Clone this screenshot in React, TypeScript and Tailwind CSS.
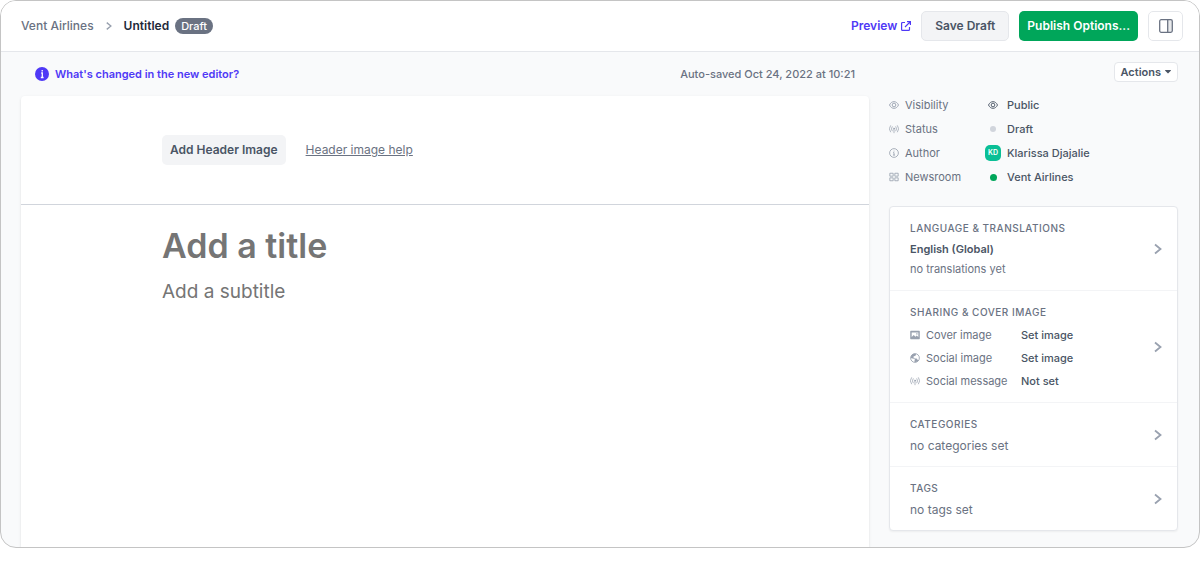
import { useId, type ReactNode } from "react";

type IconProps = { className?: string };

function EyeIcon({ className = "" }: IconProps) {
  return (
    <svg viewBox="0 0 12 10" fill="none" stroke="currentColor" strokeWidth="1.100" strokeLinejoin="round" className={className} aria-hidden="true">
      <path d="M.6 5C1.800 2.400 3.700 1 6 1S10.200 2.400 11.400 5C10.200 7.600 8.300 9 6 9S1.800 7.600.6 5Z" />
      <circle cx="6" cy="5" r="2.200" />
    </svg>
  );
}

function SignalIcon({ className = "" }: IconProps) {
  return (
    <svg viewBox="0 0 24 24" fill="none" stroke="currentColor" strokeWidth="1.800" strokeLinecap="round" className={className} aria-hidden="true">
      <path d="M3.500 4a12 12 0 0 0 0 15M20.500 4a12 12 0 0 1 0 15M7.500 6.500a8 8 0 0 0 0 10M16.500 6.500a8 8 0 0 1 0 10M12 12v9" />
      <circle cx="12" cy="11" r="1.500" />
    </svg>
  );
}

function InfoOutlineIcon({ className = "" }: IconProps) {
  return (
    <svg viewBox="0 0 24 24" fill="none" stroke="currentColor" strokeWidth="2" className={className} aria-hidden="true">
      <circle cx="12" cy="12" r="10.500" />
      <path d="M10 11h2v6M9.500 17h5M12 6.500v2" />
    </svg>
  );
}

function GridIcon({ className = "" }: IconProps) {
  return (
    <svg viewBox="0 0 24 24" fill="none" stroke="currentColor" strokeWidth="2" className={className} aria-hidden="true">
      <path d="M2 3h8v7H2zM14 3h8v7h-8zM2 14h8v7H2zM14 14h8v7h-8z" />
    </svg>
  );
}

function PictureIcon({ className = "" }: IconProps) {
  return (
    <svg viewBox="0 0 24 24" fill="currentColor" fillRule="evenodd" className={className} aria-hidden="true">
      <path d="M2 2h20a1.500 1.500 0 0 1 1.500 1.500v17A1.500 1.500 0 0 1 22 22H2A1.500 1.500 0 0 1 .5 20.500v-17A1.500 1.500 0 0 1 2 2Zm2 4V17l5-5 4 4 3-3 4 4V6H4Zm11 2h3v3h-3V8Z" />
    </svg>
  );
}

function GlobeIcon({ className = "" }: IconProps) {
  return (
    <svg viewBox="0 0 24 24" className={className} aria-hidden="true">
      <circle cx="12" cy="12" r="10.500" fill="none" stroke="currentColor" strokeWidth="2" />
      <path fill="currentColor" d="M2 12C2 5 7 1 13 2l2 2-3 3-3 1-1 3 3 1-1 2-4-1-4-1ZM10 13l6 0 2 3 3 1c-2 3-5 5-9 5l-2-3 2-2-2-4Z" />
    </svg>
  );
}

function InfoSolidIcon({ className = "" }: IconProps) {
  return (
    <svg viewBox="0 0 14 14" className={className} aria-hidden="true">
      <circle cx="7" cy="7" r="7" fill="currentColor" />
      <path d="M6.200 6H7.300V10.500M5.800 10.500h2.800M7.200 3v1.500" fill="none" stroke="white" strokeWidth="1.300" />
    </svg>
  );
}

function ExternalIcon({ className = "" }: IconProps) {
  return (
    <svg viewBox="0 0 10 10" fill="none" stroke="currentColor" strokeWidth="1.200" className={className} aria-hidden="true">
      <path d="M4 1.500H1.600a1 1 0 0 0-1 1v5.900a1 1 0 0 0 1 1h5.900a1 1 0 0 0 1-1V6M6 .6h3.400V4M9.400.6 4 6" />
    </svg>
  );
}

function PanelIcon({ className = "" }: IconProps) {
  return (
    <svg viewBox="0 0 14 14" fill="none" stroke="currentColor" strokeWidth="1.300" className={className} aria-hidden="true">
      <path d="M9 1h4v12H9z" fill="currentColor" fillOpacity=".15" stroke="none" />
      <rect x=".7" y=".7" width="12.600" height="12.600" rx="1.500" />
      <path d="M8.700.7v12.600" />
    </svg>
  );
}

function ChevronIcon({ className = "" }: IconProps) {
  return (
    <svg viewBox="0 0 8 12" fill="none" stroke="currentColor" strokeWidth="1.800" className={className} aria-hidden="true">
      <path d="M1 1.500 6.500 6 1 10.500" />
    </svg>
  );
}

function CaretIcon({ className = "" }: IconProps) {
  return (
    <svg viewBox="0 0 6 4" fill="currentColor" className={className} aria-hidden="true">
      <path d="M.5 0h5a.4.4 0 0 1 .3.700L3.300 3.300a.5.5 0 0 1-.6 0L.2.700A.4.4 0 0 1 .5 0Z" />
    </svg>
  );
}

function MetaRow({ icon, label, marker, value }: { icon: ReactNode; label: string; marker: ReactNode; value: string }) {
  return (
    <div className="flex h-6 items-center">
      <dt className="flex w-24 items-center gap-1.5 text-gray-500">
        <span className="text-gray-400">{icon}</span>
        {label}
      </dt>
      <dd className="flex items-center gap-1.5 font-medium text-gray-600">
        <span className="flex w-4 justify-center">{marker}</span>
        {value}
      </dd>
    </div>
  );
}

function PanelSection({ title, children }: { title: string; children: ReactNode }) {
  const id = useId();
  return (
    <section aria-labelledby={id} className="flex items-center justify-between pr-3.5 pl-5">
      <div className="pt-3.5 pb-2.5">
        <h2 id={id} className="text-[10px] leading-3.5 font-medium tracking-wider text-gray-500 uppercase">
          {title}
        </h2>
        {children}
      </div>
      <button type="button" aria-label={`Open ${title}`} className="p-px text-gray-400">
        <ChevronIcon className="h-3 w-2" />
      </button>
    </section>
  );
}

function SharingRow({ icon, label, value }: { icon: ReactNode; label: string; value: string }) {
  return (
    <div className="flex h-[23px] items-center">
      <dt className="flex w-[111px] items-center gap-1.5 text-gray-500">
        <span className="text-gray-400">{icon}</span>
        {label}
      </dt>
      <dd className="font-medium text-gray-600">{value}</dd>
    </div>
  );
}

export default function App() {
  return (
    <div className="overflow-hidden rounded-2xl border border-[#c4c4c4] bg-gray-50 font-['Inter',sans-serif] text-[11px] leading-4 text-gray-600">
      <header className="flex items-center justify-between border-b border-gray-200 bg-white py-2.5 pr-4 pl-5">
        <nav aria-label="Breadcrumb" className="flex items-center text-xs leading-4">
          <a href="#newsroom" className="font-medium text-gray-500">Vent Airlines</a>
          <ChevronIcon className="mx-3 h-2.5 w-1.5 text-gray-400" />
          <span className="font-semibold text-gray-800">Untitled</span>
          <span className="ml-1.5 rounded-full bg-gray-500 px-1.5 text-[11px] leading-4 font-medium text-white">Draft</span>
        </nav>
        <div className="flex items-center gap-2.5 text-xs leading-4 font-semibold">
          <a href="#preview" className="flex items-center gap-1 text-indigo-600">
            Preview
            <ExternalIcon className="size-2.5" />
          </a>
          <button type="button" className="h-[30px] rounded-[5px] border border-gray-200 bg-gray-100 px-[13px] text-gray-600">Save Draft</button>
          <button type="button" className="h-[30px] rounded-[5px] bg-[#00a65a] px-2 text-white">Publish Options...</button>
          <button type="button" aria-label="Toggle sidebar" className="flex h-[30px] w-[35px] items-center justify-center rounded-[5px] border border-gray-200 text-gray-500">
            <PanelIcon className="size-3.5" />
          </button>
        </div>
      </header>

      <div className="flex gap-5 pr-[21px] pl-5">
        <main className="flex min-w-0 flex-1 flex-col">
          <div className="flex h-11 items-center justify-between px-3.5">
            <a href="#changes" className="flex items-center gap-1.5 font-semibold text-indigo-600">
              <InfoSolidIcon className="size-3.5" />
              What's changed in the new editor?
            </a>
            <p className="font-medium text-gray-500">Auto-saved Oct 24, 2022 at 10:21</p>
          </div>
          <div className="flex-1 rounded-t bg-white shadow">
            <div className="flex items-center gap-5 border-b border-gray-300 px-[141px] py-[39px]">
              <button type="button" className="h-[30px] rounded-[5px] bg-gray-100 px-2 text-xs font-semibold text-gray-600">Add Header Image</button>
              <a href="#header-help" className="text-xs text-gray-500 underline">Header image help</a>
            </div>
            <div className="px-[141px] pt-4">
              <input type="text" aria-label="Title" placeholder="Add a title" className="block h-12 w-full text-[34px] font-semibold outline-none placeholder:text-[#757575]" />
              <input type="text" aria-label="Subtitle" placeholder="Add a subtitle" className="mt-1.5 block h-8 w-full text-[19px] outline-none placeholder:text-[#757575]" />
            </div>
          </div>
        </main>

        <aside className="w-[289px] shrink-0 pt-2.5 pb-4">
          <div className="flex justify-end">
            <button type="button" className="flex h-5 items-center gap-1 rounded border border-gray-200 bg-white px-1.5 font-semibold text-gray-600">
              Actions
              <CaretIcon className="h-1 w-1.5" />
            </button>
          </div>
          <dl className="mt-[11px]">
            <MetaRow icon={<EyeIcon className="size-2.5" />} label="Visibility" marker={<EyeIcon className="size-2.5" />} value="Public" />
            <MetaRow icon={<SignalIcon className="size-2.5" />} label="Status" marker={<span className="size-1.5 rounded-full bg-gray-300" />} value="Draft" />
            <MetaRow
              icon={<InfoOutlineIcon className="size-2.5" />}
              label="Author"
              marker={<span className="flex size-4 items-center justify-center rounded-[5px] bg-[#0abf96] text-[7px] font-semibold text-white">KD</span>}
              value="Klarissa Djajalie"
            />
            <MetaRow icon={<GridIcon className="size-2.5" />} label="Newsroom" marker={<span className="size-[7px] rounded-full bg-[#00a65a]" />} value="Vent Airlines" />
          </dl>
          <div className="mt-[17px] divide-y divide-gray-100 rounded border border-gray-200 bg-white shadow-xs">
            <PanelSection title="Language & Translations">
              <p className="mt-1.5 font-semibold">English (Global)</p>
              <p className="mt-1 mb-[3px] text-gray-500">no translations yet</p>
            </PanelSection>
            <PanelSection title="Sharing & Cover Image">
              <dl className="mt-1">
                <SharingRow icon={<PictureIcon className="size-2.5" />} label="Cover image" value="Set image" />
                <SharingRow icon={<GlobeIcon className="size-2.5" />} label="Social image" value="Set image" />
                <SharingRow icon={<SignalIcon className="size-2.5" />} label="Social message" value="Not set" />
              </dl>
            </PanelSection>
            <PanelSection title="Categories">
              <p className="mt-[7px] mb-0.5 text-xs leading-4 text-gray-500">no categories set</p>
            </PanelSection>
            <PanelSection title="Tags">
              <p className="mt-[7px] mb-0.5 text-xs leading-4 text-gray-500">no tags set</p>
            </PanelSection>
          </div>
        </aside>
      </div>
    </div>
  );
}
